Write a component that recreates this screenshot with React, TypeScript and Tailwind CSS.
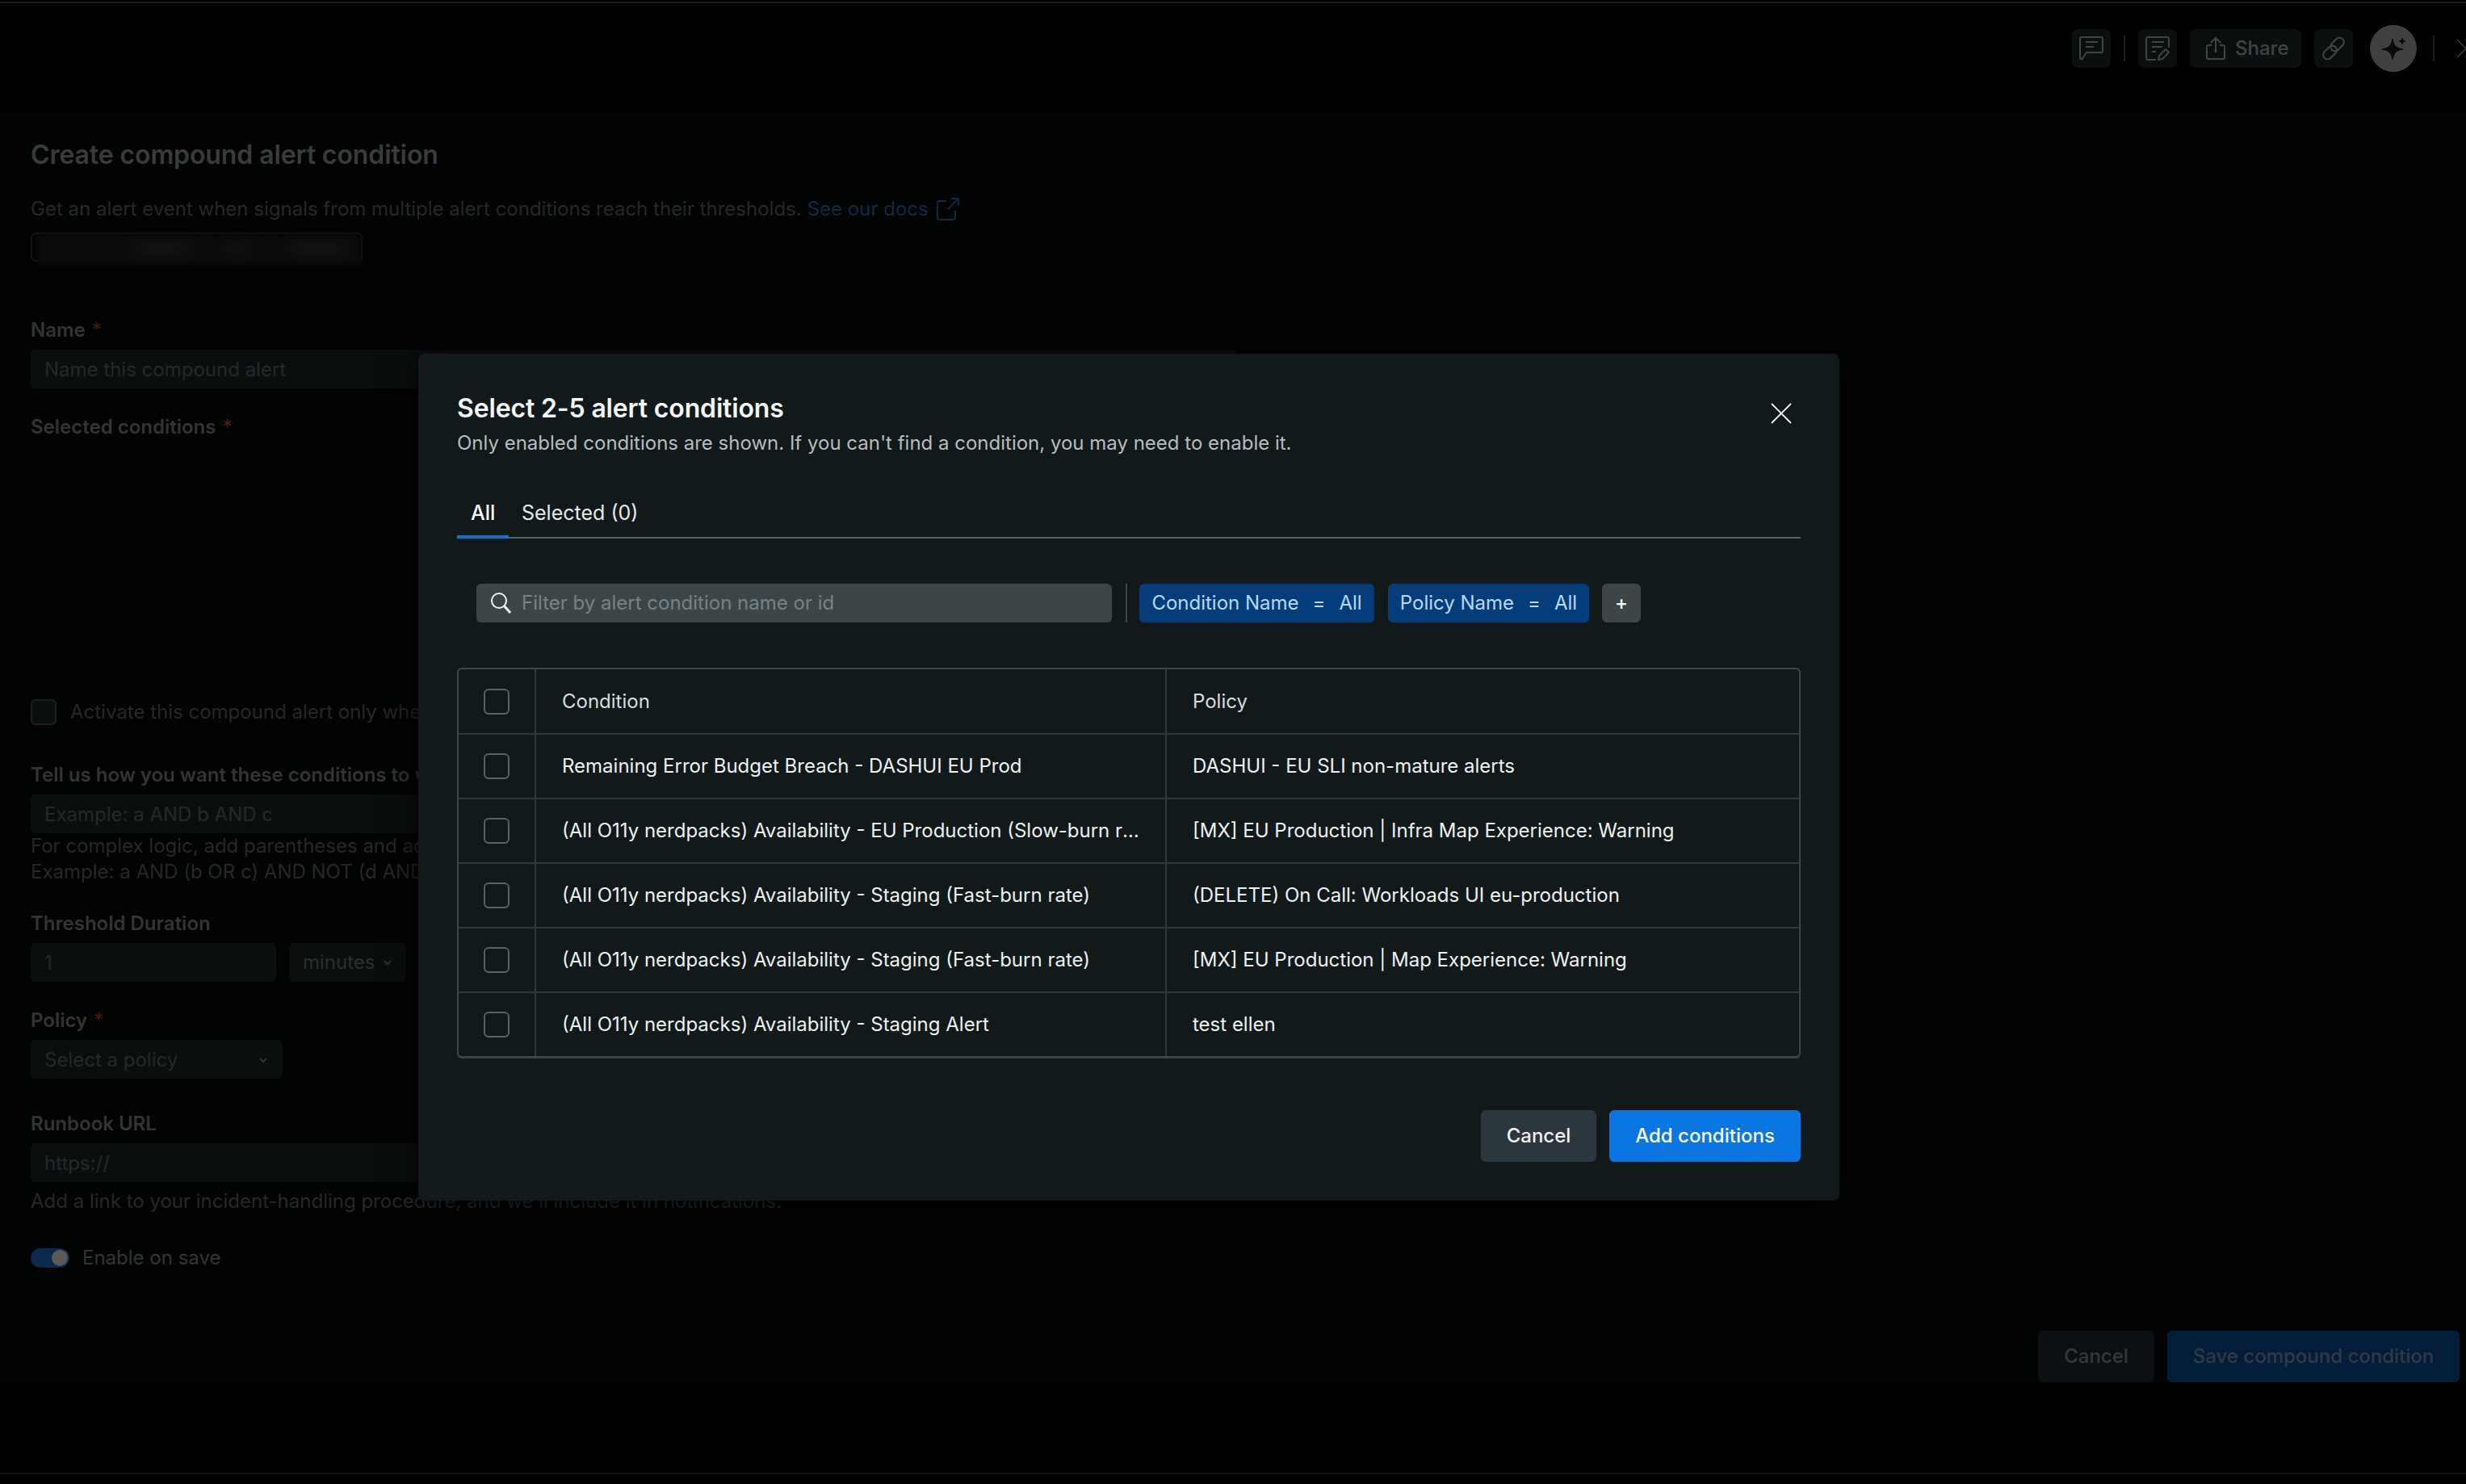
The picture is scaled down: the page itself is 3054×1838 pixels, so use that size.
import type { ReactNode } from "react";

const filas = [
  {
    condicion: "Remaining Error Budget Breach - DASHUI EU Prod",
    politica: "DASHUI - EU SLI non-mature alerts",
  },
  {
    condicion: "(All O11y nerdpacks) Availability - EU Production (Slow-burn rate)",
    politica: "[MX] EU Production | Infra Map Experience: Warning",
  },
  {
    condicion: "(All O11y nerdpacks) Availability - Staging (Fast-burn rate)",
    politica: "(DELETE) On Call: Workloads UI eu-production",
  },
  {
    condicion: "(All O11y nerdpacks) Availability - Staging (Fast-burn rate)",
    politica: "[MX] EU Production | Map Experience: Warning",
  },
  {
    condicion: "(All O11y nerdpacks) Availability - Staging Alert",
    politica: "test ellen",
  },
];

function Etiqueta({ children, requerido }: { children: ReactNode; requerido?: boolean }) {
  return (
    <div className="h-[32px] text-[24px] font-semibold leading-[32px] whitespace-nowrap text-[#333535]">
      {children}
      {requerido && <span className="ml-[8px] font-normal text-[#4a1c14]">*</span>}
    </div>
  );
}

function Campo({ texto, ancho, className = "" }: { texto: string; ancho: string; className?: string }) {
  return (
    <div
      className={`flex h-[48px] items-center rounded-[6px] bg-[#0b0e0f] pl-[17px] pt-[1px] text-[24px] whitespace-nowrap text-[#262828] ${ancho} ${className}`}
    >
      {texto}
    </div>
  );
}

function Flechita({ className }: { className: string }) {
  return (
    <svg viewBox="0 0 12 8" fill="none" stroke="#3a3c3c" strokeWidth="1.6" className={className}>
      <path d="M2 2l4 4 4-4" />
    </svg>
  );
}

function BotonIcono({ children }: { children: ReactNode }) {
  return (
    <div className="flex h-[48px] w-[48px] items-center justify-center rounded-[8px] bg-[#0c0f10]">
      {children}
    </div>
  );
}

function Casilla() {
  return <div className="h-[32px] w-[32px] rounded-[6px] border-2 border-[#566265]" />;
}

function Chip({ nombre, ancho }: { nombre: string; ancho: string }) {
  return (
    <div
      className={`flex h-[48px] items-center justify-center gap-[17px] rounded-[6px] bg-[#043d7a] text-[24px] whitespace-nowrap text-[#b9d8f7] ${ancho}`}
    >
      <span>{nombre}</span>
      <span>=</span>
      <span>All</span>
    </div>
  );
}

export default function App() {
  return (
    <div className="relative h-[1838px] w-[3054px] overflow-hidden bg-[#010101] font-['Inter',sans-serif]">
      <div className="mt-[2px] h-[2px] bg-[#1c1c1c]" />

      {/* barra superior */}
      <div className="flex h-[112px] items-center justify-end overflow-hidden">
        <BotonIcono>
          <svg viewBox="0 0 48 48" fill="none" stroke="#424444" strokeWidth="2" className="h-[48px] w-[48px]">
            <path d="M12 10h24a2 2 0 0 1 2 2v15a2 2 0 0 1-2 2H18l-5 7.500c-.8 1.200-3 .8-3-1V12a2 2 0 0 1 2-2z" strokeLinejoin="round" />
            <path d="M17 16h15M17 22h10" />
          </svg>
        </BotonIcono>
        <div className="mx-[16px] h-[32px] w-[2px] bg-[#1e1e1e]" />
        <BotonIcono>
          <svg viewBox="0 0 48 48" fill="none" stroke="#424444" strokeWidth="2" className="h-[48px] w-[48px]">
            <path d="M38 23V12a2 2 0 0 0-2-2H12a2 2 0 0 0-2 2v24a2 2 0 0 0 2 2h10" />
            <path d="M17 16h15M17 22h13M17 28h5M25 38l1-5 8-8 4 4-8 8z" strokeLinejoin="round" />
          </svg>
        </BotonIcono>
        <div className="ml-[16px] flex h-[48px] w-[138px] items-center rounded-[8px] bg-[#0c0f10] pl-[20px] text-[24px] font-medium text-[#424444]">
          <svg viewBox="0 0 24 28" fill="none" stroke="#424444" strokeWidth="2" className="mr-[12px] h-[28px] w-[24px]">
            <path d="M7 10H3a2 2 0 0 0-2 2v13a2 2 0 0 0 2 2h18a2 2 0 0 0 2-2V12a2 2 0 0 0-2-2h-4M12 19V1M6 7l6-6 6 6" />
          </svg>
          Share
        </div>
        <div className="ml-[16px]">
          <BotonIcono>
            <svg viewBox="0 0 48 48" fill="none" stroke="#424444" strokeWidth="2" className="h-[48px] w-[48px]">
              <rect x="19" y="13.500" width="19" height="11" rx="5.500" transform="rotate(-45 28.500 19)" />
              <rect x="10" y="23.500" width="19" height="11" rx="5.500" transform="rotate(-45 19.500 29)" />
            </svg>
          </BotonIcono>
        </div>
        <div className="ml-[21px] flex h-[58px] w-[58px] items-center justify-center rounded-full bg-[#404040]">
          <svg viewBox="0 0 40 40" fill="#0a0a0a" stroke="#0a0a0a" strokeLinejoin="round" className="h-[40px] w-[40px]">
            <path d="M19 8c1.200 8 4 11.500 13 13-9 1.500-11.800 5-13 13-1.200-8-4-11.500-13-13 9-1.500 11.800-5 13-13z" />
            <path d="M31 7c.5 2.500 1.200 3.300 4 4-2.800.7-3.500 1.500-4 4-.5-2.500-1.200-3.300-4-4 2.800-.7 3.500-1.500 4-4z" />
          </svg>
        </div>
        <div className="ml-[20px] h-[32px] w-[2px] shrink-0 bg-[#1e1e1e]" />
        <svg viewBox="0 0 24 24" fill="none" stroke="#3c3c3c" strokeWidth="1.500" className="ml-[27px] h-[24px] w-[24px] shrink-0 -mr-[12px]">
          <path d="M1 1l22 22M23 1L1 23" />
        </svg>
      </div>

      {/* formulario detrás del diálogo */}
      <div className="mt-[24px] bg-[#020303] pl-[38px] pt-[32px]">
        <div className="h-[40px] text-[32px] font-semibold leading-[40px] tracking-[-0.1px] text-[#3a3c3c]">
          Create compound alert condition
        </div>
        <div className="mt-[31px] flex h-[32px] items-center text-[24px] whitespace-nowrap text-[#262828]">
          Get an alert event when signals from multiple alert conditions reach their thresholds.
          <span className="ml-[7px] text-[#0f2a44]">See our docs</span>
          <svg viewBox="0 0 30 30" fill="none" stroke="#0f2a44" strokeWidth="2" className="ml-[9px] h-[30px] w-[30px]">
            <path d="M13 5H4a2 2 0 0 0-2 2v19a2 2 0 0 0 2 2h18a2 2 0 0 0 2-2v-9M15 15L28 2M19 2h9v9" />
          </svg>
        </div>
        <div className="relative mt-[13px] h-[36px] w-[411px] rounded-[6px] border-2 border-[#141617]">
          <div className="absolute -bottom-[6px] left-[6px] right-0 top-0 bg-[#0a0b0b] blur-[3px]" />
          <div className="absolute left-[125px] top-[10px] h-[16px] w-[70px] bg-[#131414] blur-[8px]" />
          <div className="absolute left-[240px] top-[10px] h-[16px] w-[30px] bg-[#131414] blur-[8px]" />
          <div className="absolute left-[320px] top-[10px] h-[16px] w-[70px] bg-[#131414] blur-[8px]" />
        </div>

        <div className="mt-[69px]">
          <Etiqueta requerido>Name</Etiqueta>
        </div>
        <Campo texto="Name this compound alert" ancho="w-[1494px]" className="mt-[8px]" />

        <div className="mt-[32px]">
          <Etiqueta requerido>Selected conditions</Etiqueta>
        </div>

        <div className="mt-[321px] flex h-[32px] items-center text-[24px] whitespace-nowrap text-[#262828]">
          <div className="mr-[17px] h-[32px] w-[32px] rounded-[6px] border-2 border-[#1a2021] bg-[#0b0e0f]" />
          Activate this compound alert only when all conditions are met
        </div>

        <div className="mt-[46px]">
          <Etiqueta>Tell us how you want these conditions to work together</Etiqueta>
        </div>
        <Campo texto="Example: a AND b AND c" ancho="w-[1494px]" className="mt-[8px]" />
        <div className="text-[24px] leading-[32px] whitespace-nowrap text-[#262828]">
          <div>For complex logic, add parentheses and additional operators</div>
          <div>Example: a AND (b OR c) AND NOT (d AND e)</div>
        </div>

        <div className="mt-[32px]">
          <Etiqueta>Threshold Duration</Etiqueta>
        </div>
        <div className="mt-[8px] flex gap-[16px]">
          <Campo texto="1" ancho="w-[304px]" />
          <div className="flex h-[48px] w-[145px] items-center rounded-[6px] bg-[#0b0e0f] pl-[17px] text-[24px] text-[#2c2e2e]">
            minutes
            <Flechita className="ml-[10px] h-[8px] w-[12px]" />
          </div>
        </div>

        <div className="mt-[32px]">
          <Etiqueta requerido>Policy</Etiqueta>
        </div>
        <div className="mt-[8px] flex h-[48px] w-[312px] items-center justify-between rounded-[6px] bg-[#0b0e0f] pl-[17px] pr-[18px] pt-[1px] text-[24px] text-[#262828]">
          Select a policy
          <Flechita className="h-[8px] w-[12px]" />
        </div>

        <div className="mt-[40px]">
          <Etiqueta>Runbook URL</Etiqueta>
        </div>
        <Campo texto="https://" ancho="w-[1494px]" className="mt-[8px]" />
        <div className="mt-[8px] text-[24px] leading-[32px] whitespace-nowrap text-[#262828]">
          Add a link to your incident-handling procedure, and we'll include it in notifications.
        </div>

        <div className="mt-[38px] flex h-[32px] items-center text-[24px] text-[#333535]">
          <div className="mr-[16px] flex h-[24px] w-[48px] items-center justify-end rounded-full bg-[#0d2a4e] pr-[2px]">
            <div className="h-[20px] w-[20px] rounded-full bg-[#5a5a5a]" />
          </div>
          Enable on save
        </div>

        <div className="mt-[74px] flex justify-end gap-[16px] pr-[8px] text-[24px] font-medium">
          <div className="flex h-[64px] w-[144px] items-center justify-center rounded-[6px] bg-[#0c1012] text-[#363838]">
            Cancel
          </div>
          <div className="flex h-[64px] w-[362px] items-center justify-center rounded-[6px] bg-[#031d3a] text-[#2e3a46]">
            Save compound condition
          </div>
        </div>
      </div>
      <div className="mt-[112px] h-[2px] bg-[#141414]" />

      {/* diálogo */}
      <div className="absolute left-[518px] top-[438px] w-[1760px] rounded-[8px] bg-[#11191b] px-[48px] pb-[48px] pt-[48px] shadow-[0_0_48px_rgba(0,0,0,0.9)]">
        <svg viewBox="0 0 26 26" fill="none" stroke="#f2f4f4" strokeWidth="1.800" className="absolute left-[1675px] top-[61px] h-[26px] w-[26px]">
          <path d="M1 1l24 24M25 1L1 25" />
        </svg>
        <div className="h-[40px] text-[32px] font-semibold leading-[40px] tracking-[-0.15px] text-[#f4f6f6]">
          Select 2-5 alert conditions
        </div>
        <div className="mt-[7px] text-[24px] leading-[32px] text-[#b7bdbe]">
          Only enabled conditions are shown. If you can't find a condition, you may need to enable it.
        </div>

        <div className="mt-[54px] flex h-[48px] items-start border-b-2 border-[#566265] text-[25px] leading-[32px]">
          <div className="-mb-[2px] h-[48px] w-[64px] border-b-4 border-[#1a6dc9] pl-[17px] font-medium text-white">
            All
          </div>
          <div className="pl-[16px] text-[#e6eaea]">Selected (0)</div>
        </div>

        <div className="mt-[56px] flex h-[48px] items-center pl-[24px]">
          <div className="flex h-[48px] w-[787px] items-center rounded-[6px] bg-[#3c4649] pl-[17px] text-[24px] text-[#778284]">
            <svg viewBox="0 0 28 28" fill="none" stroke="#f2f4f4" className="mr-[11px] h-[28px] w-[28px]">
              <circle cx="11" cy="11" r="9" strokeWidth="2" />
              <path d="M17.500 17.500L25 26" strokeWidth="3" />
            </svg>
            Filter by alert condition name or id
          </div>
          <div className="ml-[17px] h-[48px] w-[2px] bg-[#3c4649]" />
          <div className="ml-[15px] flex gap-[17px]">
            <Chip nombre="Condition Name" ancho="w-[291px]" />
            <Chip nombre="Policy Name" ancho="w-[249px]" />
          </div>
          <div className="ml-[16px] flex h-[48px] w-[48px] items-center justify-center rounded-[6px] bg-[#3c4649] text-[24px] font-medium text-white">
            +
          </div>
        </div>

        <div className="mt-[56px] w-[1664px] rounded-[6px] border-x-2 border-t-2 border-b-[3px] border-[#3c4649] text-[24px]">
          <div className="grid h-[81px] grid-cols-[96px_781px_1fr] border-b-2 border-[#2d393c] text-[#d8dddd]">
            <div className="flex items-center justify-center border-r-2 border-[#2d393c]">
              <Casilla />
            </div>
            <div className="flex items-center border-r-2 border-[#2d393c] pl-[32px]">Condition</div>
            <div className="flex items-center pl-[32px]">Policy</div>
          </div>
          {filas.map((fila, i) => (
            <div
              key={i}
              className="grid h-[80px] grid-cols-[96px_781px_1fr] border-b-2 border-[#2d393c] text-[#eef1f1] last:h-[78px] last:border-b-0"
            >
              <div className="flex items-center justify-center border-r-2 border-[#2d393c]">
                <Casilla />
              </div>
              <div className="flex min-w-0 items-center border-r-2 border-[#2d393c] pl-[32px] pr-[30px]">
                <span className="truncate">{fila.condicion}</span>
              </div>
              <div className="flex items-center pl-[32px]">{fila.politica}</div>
            </div>
          ))}
        </div>

        <div className="mt-[64px] flex justify-end gap-[16px] text-[24px] font-medium">
          <div className="flex h-[64px] w-[143px] items-center justify-center rounded-[6px] bg-[#2b363d] text-[#f2f4f4]">
            Cancel
          </div>
          <div className="flex h-[64px] w-[237px] items-center justify-center rounded-[6px] bg-[#0b75e2] text-white">
            Add conditions
          </div>
        </div>
      </div>
    </div>
  );
}
